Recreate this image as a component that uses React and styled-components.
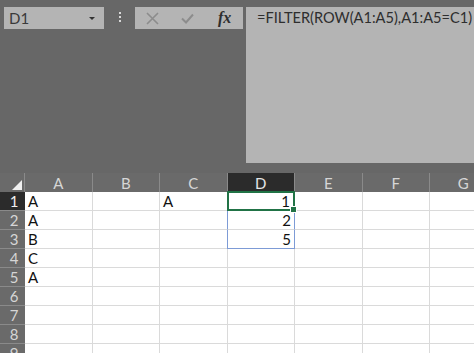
import React from "react";
import styled, { createGlobalStyle } from "styled-components";

const GlobalStyle = createGlobalStyle`
  html, body {
    margin: 0;
    padding: 0;
    background: #676767;
    font-family: "Lato", "Open Sans", sans-serif;
    overflow: hidden;
  }
`;

const Page = styled.div`
  width: 474px;
  height: 353px;
  background: #676767;
  overflow: hidden;
`;

const TopBar = styled.div`
  display: flex;
  align-items: flex-start;
  height: 173px;
  padding: 7px 0 0 4px;
  box-sizing: border-box;
`;

const NameBox = styled.div`
  display: flex;
  align-items: center;
  justify-content: space-between;
  width: 100px;
  height: 22px;
  padding: 0 9px 0 5px;
  box-sizing: border-box;
  background: #b4b4b4;
  color: #3a3a3a;
  font-size: 15px;
`;

const Caret = styled.span`
  width: 0;
  height: 0;
  border-left: 3px solid transparent;
  border-right: 3px solid transparent;
  border-top: 3px solid #333;
`;

const Dots = styled.div`
  display: flex;
  flex-direction: column;
  gap: 2px;
  width: 31px;
  align-items: center;
  padding-top: 5px;
`;

const Dot = styled.span`
  width: 2px;
  height: 2px;
  background: #d8d8d8;
`;

const FuncBox = styled.div`
  display: flex;
  align-items: center;
  width: 108px;
  height: 22px;
  background: #b4b4b4;
  padding-left: 11px;
  gap: 22px;
  box-sizing: border-box;
`;

const Fx = styled.span`
  font-family: "Liberation Serif", serif;
  font-style: italic;
  font-weight: bold;
  font-size: 16px;
  color: #2e2e2e;
  margin-left: 2px;
`;

const FormulaBox = styled.div`
  margin-left: 3px;
  flex: 1;
  height: 156px;
  background: #b4b4b4;
  color: #2e2e2e;
  font-size: 14.6px;
  padding: 2px 0 0 11px;
  box-sizing: border-box;
`;

const Grid = styled.div`
  display: grid;
  grid-template-columns: 25px repeat(7, 67.5px);
  grid-auto-rows: 19px;
  background: #fff;
`;

const ColHead = styled.div`
  background: ${(p) => (p.$active ? "#2b2b2b" : "#6a6a6a")};
  color: ${(p) => (p.$active ? "#e6e6e6" : "#d6d6d6")};
  border-right: 1px solid #8a8a8a;
  font-size: 15px;
  display: flex;
  align-items: center;
  justify-content: center;
  box-sizing: border-box;
`;

const Corner = styled.div`
  position: relative;
  background: #6a6a6a;
  border-right: 1px solid #8a8a8a;
  box-sizing: border-box;
`;

const CornerTri = styled.span`
  position: absolute;
  right: 2px;
  bottom: 2px;
  width: 0;
  height: 0;
  border-left: 10px solid transparent;
  border-bottom: 10px solid #f0f0f0;
`;

const RowHead = styled.div`
  background: ${(p) => (p.$active ? "#2b2b2b" : "#6a6a6a")};
  color: ${(p) => (p.$active ? "#f0f0f0" : "#d6d6d6")};
  border-bottom: 1px solid #8a8a8a;
  font-size: 15px;
  display: flex;
  align-items: center;
  justify-content: center;
  box-sizing: border-box;
  padding-left: 3px;
`;

const Cell = styled.div`
  position: relative;
  border-right: 1px solid #dadada;
  border-bottom: 1px solid #dadada;
  box-sizing: border-box;
  font-size: 15px;
  color: #111;
  display: flex;
  align-items: center;
  justify-content: ${(p) => (p.$num ? "flex-end" : "flex-start")};
  padding: 0 3px;
  ${(p) => p.$spill && `
    border-left: 1px solid #7d9bd6;
    border-right: 1px solid #7d9bd6;
    margin-left: -1px;
  `}
  ${(p) => p.$spillEnd && `border-bottom: 1px solid #7d9bd6;`}
  ${(p) => p.$activeCell && `
    border: 2px solid #217346;
    margin-left: -1px;
    margin-top: -1px;
  `}
`;

const Handle = styled.span`
  position: absolute;
  right: -4px;
  bottom: -4px;
  width: 5px;
  height: 5px;
  background: #217346;
  border: 1px solid #fff;
  z-index: 2;
`;

const cols = ["A", "B", "C", "D", "E", "F", "G"];
const data = {
  "A1": "A", "C1": "A", "D1": "1",
  "A2": "A", "D2": "2",
  "A3": "B", "D3": "5",
  "A4": "C",
  "A5": "A",
};

export default function App() {
  const rows = [1, 2, 3, 4, 5, 6, 7, 8, 9];
  return (
    <Page>
      <GlobalStyle />
      <TopBar>
        <NameBox>
          <span>D1</span>
          <Caret />
        </NameBox>
        <Dots>
          <Dot />
          <Dot />
          <Dot />
        </Dots>
        <FuncBox>
          <svg width="13" height="13" viewBox="0 0 13 13">
            <path d="M1 1 L12 12 M12 1 L1 12" stroke="#8c8c8c" strokeWidth="1.6" fill="none" />
          </svg>
          <svg width="13" height="11" viewBox="0 0 13 11">
            <path d="M1 5.5 L5 9.5 L12 1.5" stroke="#8c8c8c" strokeWidth="2" fill="none" />
          </svg>
          <Fx>fx</Fx>
        </FuncBox>
        <FormulaBox>=FILTER(ROW(A1:A5),A1:A5=C1)</FormulaBox>
      </TopBar>
      <Grid>
        <Corner>
          <CornerTri />
        </Corner>
        {cols.map((c) => (
          <ColHead key={c} $active={c === "D"}>{c}</ColHead>
        ))}
        {rows.map((r) => (
          <React.Fragment key={r}>
            <RowHead $active={r === 1}>{r}</RowHead>
            {cols.map((c) => {
              const id = c + r;
              const isD = c === "D";
              return (
                <Cell
                  key={id}
                  $num={isD}
                  $activeCell={id === "D1"}
                  $spill={isD && (r === 2 || r === 3)}
                  $spillEnd={id === "D3"}
                >
                  {data[id]}
                  {id === "D1" && <Handle />}
                </Cell>
              );
            })}
          </React.Fragment>
        ))}
      </Grid>
    </Page>
  );
}
